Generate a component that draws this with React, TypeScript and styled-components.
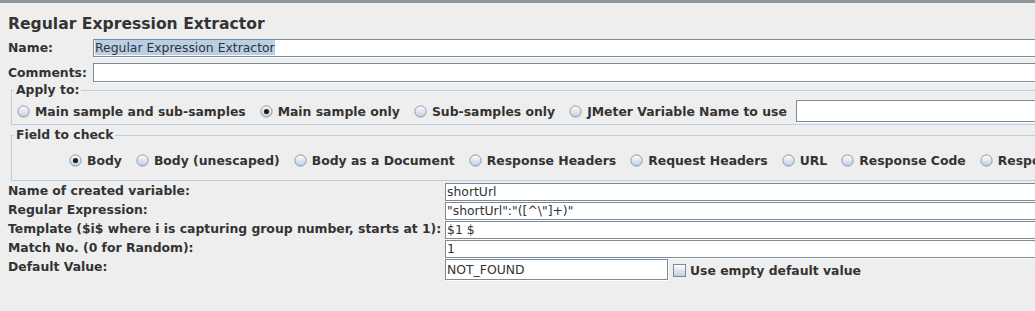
import React from 'react';
import styled, { createGlobalStyle } from 'styled-components';

const GlobalStyle = createGlobalStyle`
  html, body {
    margin: 0;
    padding: 0;
    background: #eeeeee;
  }
`;

const Panel = styled.div`
  height: 311px;
  box-sizing: border-box;
  border-top: 3px solid #8d959d;
  background: #eeeeee;
  color: #333333;
  font-family: "DejaVu Sans", "Liberation Sans", sans-serif;
  font-size: 12.4px;
  overflow: hidden;
  padding-left: 8px;
`;

const Title = styled.div`
  margin-top: 11px;
  font-size: 15.6px;
  font-weight: bold;
  line-height: 20px;
  white-space: nowrap;
`;

const Row = styled.div<{ $height: number; $top: number }>`
  display: flex;
  align-items: flex-start;
  height: ${({ $height }) => $height}px;
  margin-top: ${({ $top }) => $top}px;
`;

const RowLabel = styled.div<{ $height: number }>`
  width: 85px;
  flex-shrink: 0;
  font-weight: bold;
  line-height: ${({ $height }) => $height}px;
  white-space: nowrap;
`;

const TextField = styled.div<{ $height: number; $width?: number }>`
  box-sizing: border-box;
  height: ${({ $height }) => $height}px;
  ${({ $width }) => ($width ? `width: ${$width}px; flex-shrink: 0;` : 'flex: 1; margin-right: -30px;')}
  border: 1px solid #7a8a99;
  box-shadow: 1px 1px 0 #ffffff;
  background: #ffffff;
  padding-left: 1px;
  line-height: ${({ $height }) => $height - 2}px;
  white-space: nowrap;
  overflow: hidden;
`;

const Selected = styled.span`
  background: #b8cfe5;
  display: inline-block;
  line-height: 15px;
`;

const Group = styled.fieldset<{ $top: number }>`
  margin: ${({ $top }) => $top}px -30px 0 3px;
  padding: 0;
  border: 1px solid #b8cfe5;
  min-width: 0;
`;

const Legend = styled.legend`
  padding: 0 2px;
  margin-left: 2px;
  font-weight: bold;
  line-height: 14px;
  white-space: nowrap;
`;

const RadioRow = styled.div<{ $height: number; $inset: number; $pad: string }>`
  display: flex;
  align-items: center;
  gap: 14px;
  height: ${({ $height }) => $height}px;
  margin: ${({ $pad }) => $pad};
  padding-left: ${({ $inset }) => $inset}px;
`;

const RadioItem = styled.label`
  display: flex;
  align-items: center;
  gap: 5px;
  flex-shrink: 0;
  font-weight: bold;
  white-space: nowrap;
`;

const VarField = styled(TextField)`
  margin-left: -5px;
`;

const Form = styled.div`
  display: flex;
`;

const LabelColumn = styled.div`
  width: 437px;
  flex-shrink: 0;
  display: flex;
  flex-direction: column;
`;

const FieldLabel = styled.div`
  font-weight: bold;
  line-height: 19px;
  white-space: nowrap;
`;

const FieldColumn = styled.div`
  flex: 1;
  display: flex;
  flex-direction: column;
  gap: 1px;
  padding-top: 2px;
`;

const FieldRow = styled.div`
  display: flex;
  align-items: center;
`;

const CheckLabel = styled.label`
  display: flex;
  align-items: center;
  gap: 4px;
  margin-left: 5px;
  margin-top: 2px;
  font-weight: bold;
  white-space: nowrap;
`;

const Radio = ({ checked }: { checked?: boolean }) => (
  <svg width="13" height="13" viewBox="0 0 13 13">
    <defs>
      <linearGradient id="radioFill" x1="0" y1="0" x2="0" y2="1">
        <stop offset="0%" stopColor="#ffffff" />
        <stop offset="100%" stopColor="#bccde0" />
      </linearGradient>
    </defs>
    <circle cx="6.5" cy="6.5" r="5.6" fill="url(#radioFill)" stroke="#8a98a6" strokeWidth="1" />
    {checked && <circle cx="6.5" cy="6.5" r="2.6" fill="#222222" />}
  </svg>
);

const Checkbox = () => (
  <svg width="13" height="13" viewBox="0 0 13 13">
    <defs>
      <linearGradient id="checkFill" x1="0" y1="0" x2="0" y2="1">
        <stop offset="0%" stopColor="#ffffff" />
        <stop offset="100%" stopColor="#bccde0" />
      </linearGradient>
    </defs>
    <rect x="0.5" y="0.5" width="12" height="12" fill="url(#checkFill)" stroke="#7a8a99" />
  </svg>
);

const applyOptions = [
  { label: 'Main sample and sub-samples', checked: false },
  { label: 'Main sample only', checked: true },
  { label: 'Sub-samples only', checked: false },
  { label: 'JMeter Variable Name to use', checked: false },
];

const fieldOptions = [
  { label: 'Body', checked: true },
  { label: 'Body (unescaped)', checked: false },
  { label: 'Body as a Document', checked: false },
  { label: 'Response Headers', checked: false },
  { label: 'Request Headers', checked: false },
  { label: 'URL', checked: false },
  { label: 'Response Code', checked: false },
  { label: 'Response Message', checked: false },
];

const fields = [
  { label: 'Name of created variable:', value: 'shortUrl' },
  { label: 'Regular Expression:', value: '"shortUrl":"([^\\"]+)"' },
  { label: 'Template ($i$ where i is capturing group number, starts at 1):', value: '$1 $' },
  { label: 'Match No. (0 for Random):', value: '1' },
];

export default function App() {
  return (
    <>
      <GlobalStyle />
      <Panel>
        <Title>Regular Expression Extractor</Title>

        <Row $height={19} $top={5}>
          <RowLabel $height={18}>Name:</RowLabel>
          <TextField $height={18}>
            <Selected>Regular Expression Extractor</Selected>
          </TextField>
        </Row>

        <Row $height={20} $top={5}>
          <RowLabel $height={19}>Comments:</RowLabel>
          <TextField $height={19} />
        </Row>

        <Group $top={0}>
          <Legend>Apply to:</Legend>
          <RadioRow $height={22} $inset={5} $pad="3px 0 2px">
            {applyOptions.map((o) => (
              <RadioItem key={o.label}>
                <Radio checked={o.checked} />
                {o.label}
              </RadioItem>
            ))}
            <VarField $height={22} />
          </RadioRow>
        </Group>

        <Group $top={3}>
          <Legend>Field to check</Legend>
          <RadioRow $height={20} $inset={57} $pad="8px 0 10px">
            {fieldOptions.map((o) => (
              <RadioItem key={o.label}>
                <Radio checked={o.checked} />
                {o.label}
              </RadioItem>
            ))}
          </RadioRow>
        </Group>

        <Form>
          <LabelColumn>
            {fields.map((f) => (
              <FieldLabel key={f.label}>{f.label}</FieldLabel>
            ))}
            <FieldLabel>Default Value:</FieldLabel>
          </LabelColumn>
          <FieldColumn>
            {fields.map((f) => (
              <TextField key={f.label} $height={18}>
                {f.value}
              </TextField>
            ))}
            <FieldRow>
              <TextField $height={21} $width={223}>
                NOT_FOUND
              </TextField>
              <CheckLabel>
                <Checkbox />
                Use empty default value
              </CheckLabel>
            </FieldRow>
          </FieldColumn>
        </Form>
      </Panel>
    </>
  );
}
